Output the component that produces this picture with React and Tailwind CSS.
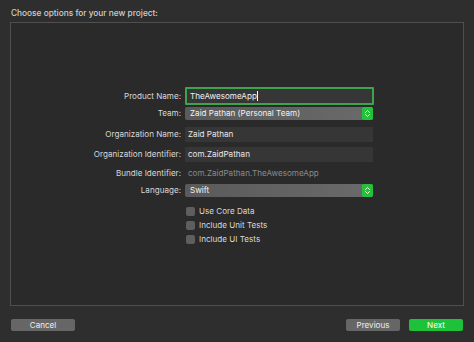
import React from "react";

function Stepper() {
  return (
    <div className="w-[11px] h-[13px] bg-[#22c33b] rounded-[2px] flex items-center justify-center">
      <svg width="7" height="9" viewBox="0 0 7 9" fill="none" stroke="#e8ffe8" strokeWidth="1" strokeLinecap="round" strokeLinejoin="round">
        <path d="M1.5 3.5 3.5 1.5 5.5 3.5" />
        <path d="M1.5 5.5 3.5 7.5 5.5 5.5" />
      </svg>
    </div>
  );
}

function Row({ label, children, h = "h-[15px]" }) {
  return (
    <div className={`flex items-center ${h}`}>
      <div className="w-[174px] text-right pr-[4px] text-[#d8d8d8]">{label}</div>
      {children}
    </div>
  );
}

function Check({ label }) {
  return (
    <div className="flex items-center h-[14px] pl-[175px]">
      <div className="w-[9px] h-[9px] bg-[#5e5e5e] rounded-[2px] mr-[4px]" />
      <span className="text-[#d8d8d8]">{label}</span>
    </div>
  );
}

export default function App() {
  return (
    <div
      className="w-[474px] h-[342px] bg-[#2e2e2e] flex flex-col text-[8.1px] leading-none"
      style={{ fontFamily: "Inter, 'Liberation Sans', sans-serif" }}
    >
      <div className="h-[22px] pl-[11px] pt-[9px] text-[#cfcfcf] font-medium text-[8.3px]">
        Choose options for your new project:
      </div>
      <div className="mx-[10px] h-[284px] border border-[#4f4f4f] bg-[#2a2a2a] flex flex-col pt-[64px]">
        <Row label="Product Name:" h="h-[18px]">
          <div className="w-[189px] h-[18px] border-2 border-[#3fa34d] bg-[#363636] rounded-[1px] flex items-center pl-[3px] text-[#f0f0f0]">
            TheAwesomeApp<span className="w-px h-[10px] bg-white" />
          </div>
        </Row>
        <div className="h-[2px]" />
        <Row label="Team:" h="h-[13px]">
          <div className="w-[188px] h-[13px] bg-gradient-to-r from-[#5a5a5a] to-[#6a6a6a] rounded-[2px] flex items-center justify-between pl-[5px] text-[#f2f2f2]">
            Zaid Pathan (Personal Team)
            <Stepper />
          </div>
        </Row>
        <div className="h-[7px]" />
        <Row label="Organization Name:">
          <div className="w-[188px] h-[15px] bg-[#363636] flex items-center pl-[3px] text-[#e8e8e8]">Zaid Pathan</div>
        </Row>
        <div className="h-[5px]" />
        <Row label="Organization Identifier:">
          <div className="w-[188px] h-[15px] bg-[#363636] flex items-center pl-[3px] text-[#e8e8e8]">com.ZaidPathan</div>
        </Row>
        <div className="h-[3px]" />
        <Row label="Bundle Identifier:" h="h-[16px]">
          <div className="pl-[3px] text-[#8a8a8a]">com.ZaidPathan.TheAwesomeApp</div>
        </Row>
        <div className="h-[3px]" />
        <Row label="Language:" h="h-[13px]">
          <div className="w-[188px] h-[13px] bg-gradient-to-r from-[#5a5a5a] to-[#6a6a6a] rounded-[2px] flex items-center justify-between pl-[5px] text-[#f2f2f2]">
            Swift
            <Stepper />
          </div>
        </Row>
        <div className="h-[7px]" />
        <Check label="Use Core Data" />
        <Check label="Include Unit Tests" />
        <Check label="Include UI Tests" />
      </div>
      <div className="flex items-center justify-between px-[11px] mt-[13px]">
        <button className="w-[64px] h-[12px] bg-[#666] rounded-[2px] text-[#eee] leading-none">Cancel</button>
        <div className="flex gap-[9px]">
          <button className="w-[54px] h-[12px] bg-[#666] rounded-[2px] text-[#eee] leading-none">Previous</button>
          <button className="w-[54px] h-[12px] bg-[#1ec23a] rounded-[2px] text-white leading-none">Next</button>
        </div>
      </div>
    </div>
  );
}
